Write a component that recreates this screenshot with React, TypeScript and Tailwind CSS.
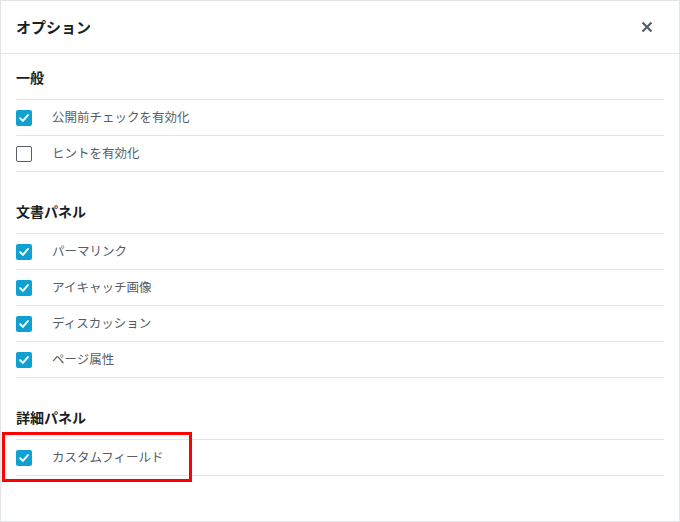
const font = "font-['Noto_Sans_CJK_JP','Noto_Sans',sans-serif]";

type Item = { label: string; checked: boolean; highlight?: boolean };
type Section = { title: string; items: Item[] };

const sections: Section[] = [
  {
    title: "一般",
    items: [
      { label: "公開前チェックを有効化", checked: true },
      { label: "ヒントを有効化", checked: false },
    ],
  },
  {
    title: "文書パネル",
    items: [
      { label: "パーマリンク", checked: true },
      { label: "アイキャッチ画像", checked: true },
      { label: "ディスカッション", checked: true },
      { label: "ページ属性", checked: true },
    ],
  },
  {
    title: "詳細パネル",
    items: [{ label: "カスタムフィールド", checked: true, highlight: true }],
  },
];

const Checkbox = ({ checked }: { checked: boolean }) =>
  checked ? (
    <span className="w-4 h-4 rounded-[2px] bg-[#11a0d2] flex items-center justify-center">
      <svg width="12" height="12" viewBox="0 0 12 12" fill="none">
        <path
          d="M2.2 6.2 L4.9 8.9 L9.9 3.1"
          stroke="white"
          strokeWidth="2"
          strokeLinecap="round"
          strokeLinejoin="round"
        />
      </svg>
    </span>
  ) : (
    <span className="w-4 h-4 rounded-[2px] border-[1.5px] border-[#555d66] bg-white" />
  );

const Row = ({ item }: { item: Item }) => (
  <div className="relative h-9 border-b border-[#e2e4e7] flex items-center">
    <Checkbox checked={item.checked} />
    <span className="ml-5 text-[12.5px] text-[#555d66]">{item.label}</span>
    {item.highlight && (
      <div className="absolute left-[-14px] top-[-8px] w-[190px] h-[50px] border-[3px] border-[#ff0000]" />
    )}
  </div>
);

export default function App() {
  return (
    <div className={`w-[680px] h-[522px] bg-white border border-[#e2e4e7] ${font}`}>
      {/* header */}
      <div className="h-[53px] border-b border-[#e2e4e7] flex items-center justify-between pl-[15px] pr-[26px]">
        <span className="text-[15px] font-bold text-[#191e23]">オプション</span>
        <svg width="12" height="12" viewBox="0 0 12 12">
          <path d="M1.5 1.5 L10.5 10.5 M10.5 1.5 L1.5 10.5" stroke="#555d66" strokeWidth="2.2" />
        </svg>
      </div>
      {/* sections */}
      <div className="px-[15px]">
        {sections.map((s, i) => (
          <div key={s.title} className={i === 0 ? "mt-[13px]" : "mt-[29px]"}>
            <div className="h-5 flex items-center text-[14px] font-bold text-[#191e23] mb-3">{s.title}</div>
            <div className="border-t border-[#e2e4e7]">
              {s.items.map((it) => (
                <Row key={it.label} item={it} />
              ))}
            </div>
          </div>
        ))}
      </div>
    </div>
  );
}
